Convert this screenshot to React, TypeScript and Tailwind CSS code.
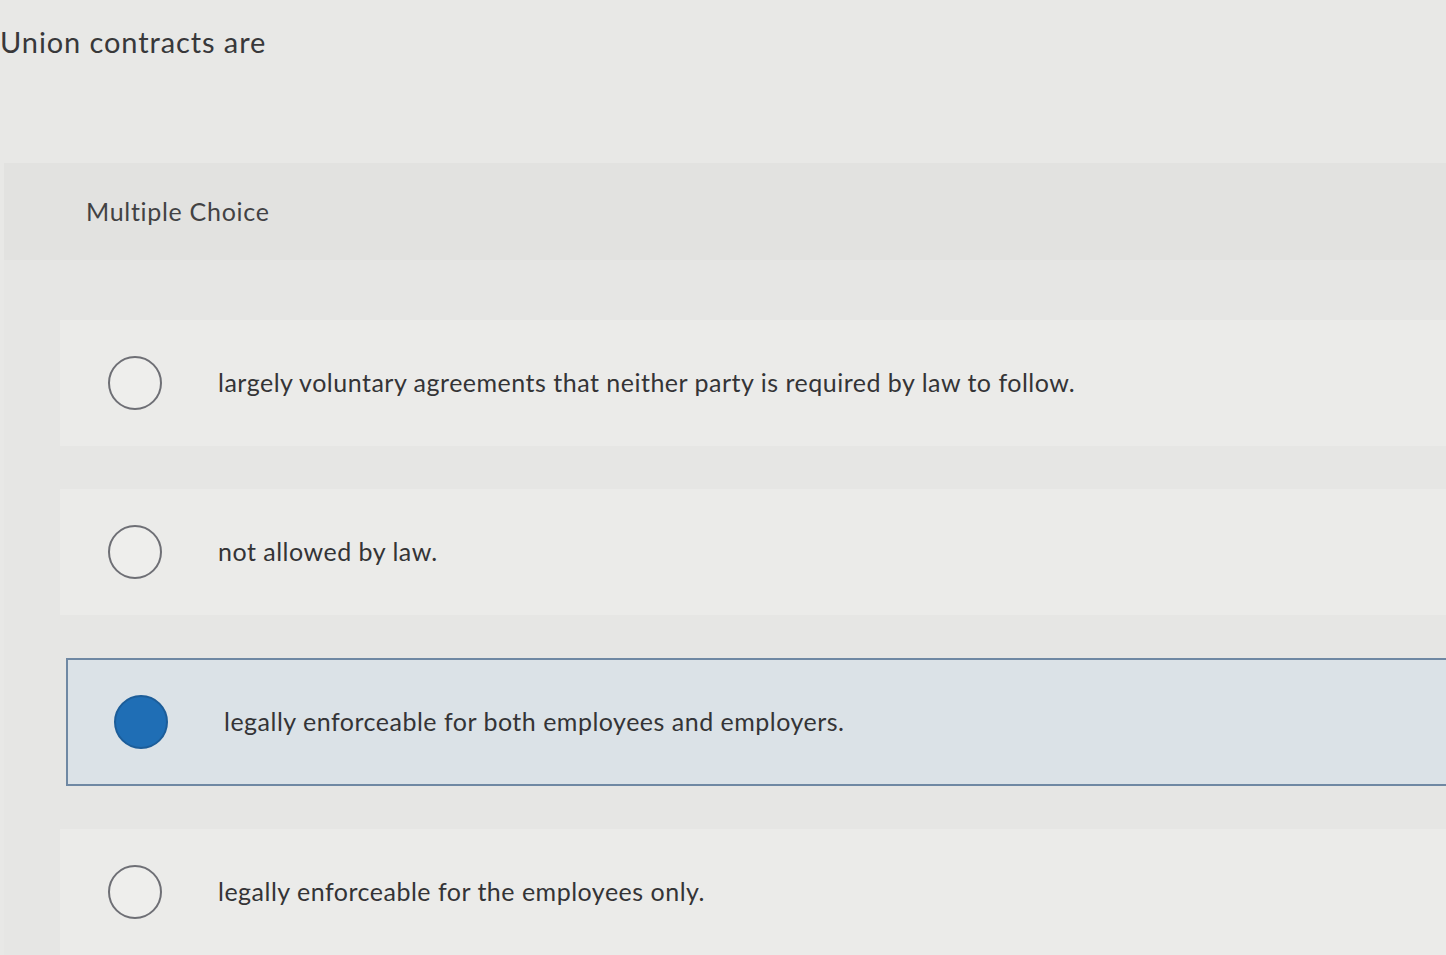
import React from "react";

type Option = {
  id: string;
  label: string;
};

const options: Option[] = [
  { id: "a", label: "largely voluntary agreements that neither party is required by law to follow." },
  { id: "b", label: "not allowed by law." },
  { id: "c", label: "legally enforceable for both employees and employers." },
  { id: "d", label: "legally enforceable for the employees only." },
];

function Radio({ checked }: { checked: boolean }) {
  if (checked) {
    return (
      <span className="block h-[54px] w-[54px] shrink-0 rounded-full border-2 border-[#1c5d99] bg-[#1f6eb5]" />
    );
  }
  return (
    <span className="block h-[54px] w-[54px] shrink-0 rounded-full border-[2.5px] border-[#6e6f75] bg-[#eeeeec]" />
  );
}

function OptionRow({ option, checked }: { option: Option; checked: boolean }) {
  return (
    <label
      className={
        checked
          ? "ml-[6px] flex h-[128px] cursor-pointer items-center border-2 border-r-0 border-[#6f88a3] bg-[#dbe2e7] pl-[46px]"
          : "flex h-[126px] cursor-pointer items-center bg-[#ebebe9] pl-[48px]"
      }
    >
      <Radio checked={checked} />
      <span className="ml-[56px] text-[25px] tracking-[0.5px] text-[#343436]">{option.label}</span>
    </label>
  );
}

export default function App() {
  const selected = "c";

  return (
    <div
      className="h-[955px] overflow-hidden bg-[#e8e8e6] text-[#38383a]"
      style={{ fontFamily: "Lato, 'Open Sans', Arial, sans-serif" }}
    >
      <h1 className="pt-[22px] text-[29px] leading-[40px] font-normal tracking-[0.9px]">Union contracts are</h1>

      <section className="mt-[101px] ml-[4px] bg-[#e6e6e4]">
        <div className="flex h-[97px] items-center bg-[#e2e2e0] pl-[82px] text-[25px] tracking-[0.7px] text-[#424244]">
          Multiple Choice
        </div>

        <div className="flex flex-col gap-[43px] pt-[60px] pl-[56px]">
          {options.map((o) => (
            <OptionRow key={o.id} option={o} checked={o.id === selected} />
          ))}
        </div>
      </section>
    </div>
  );
}
